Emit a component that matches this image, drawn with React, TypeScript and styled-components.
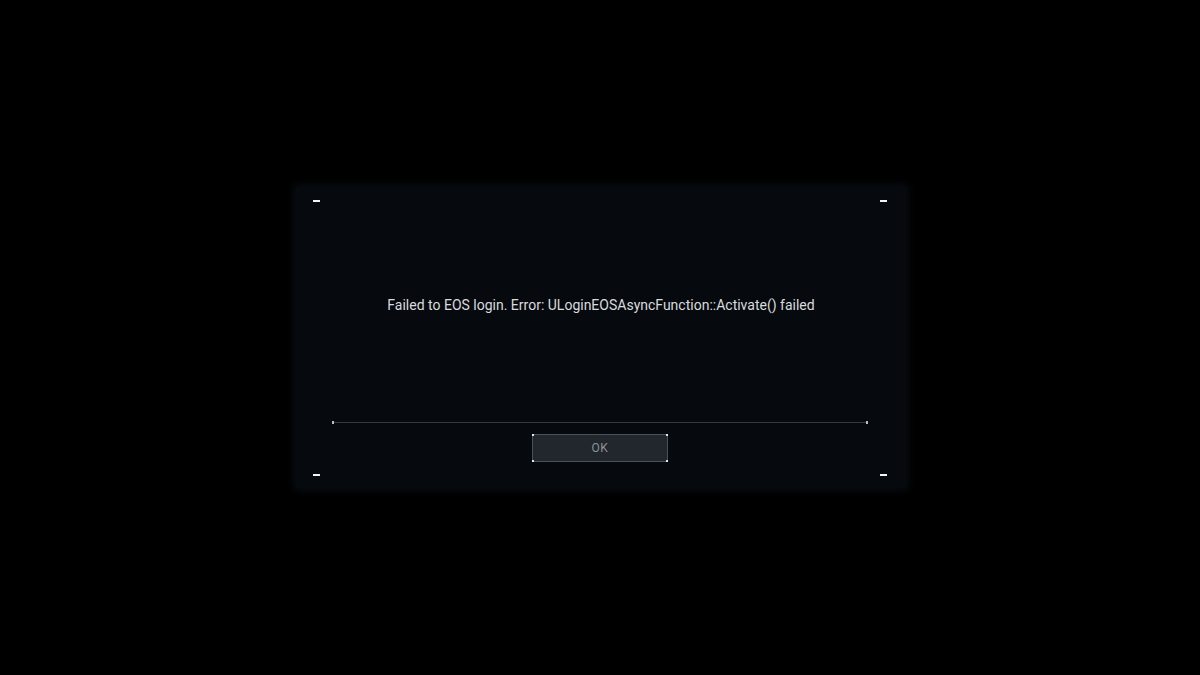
import React from 'react';
import styled, { createGlobalStyle } from 'styled-components';

const GlobalStyle = createGlobalStyle`
  html, body {
    margin: 0;
    padding: 0;
    background: #000;
  }
  #root {
    height: 675px;
  }
`;

const Screen = styled.div`
  width: 1200px;
  height: 675px;
  background: #000;
  display: flex;
  align-items: center;
  justify-content: center;
  font-family: Roboto, "Noto Sans", sans-serif;
`;

const Panel = styled.div`
  position: relative;
  width: 610px;
  height: 301px;
  margin-left: 2px;
  background: #060a0e;
  box-shadow: 0 0 8px 2px rgba(10, 16, 22, 0.85);
  display: flex;
  flex-direction: column;
  align-items: center;
  box-sizing: border-box;
  padding: 107px 36px 0;
`;

const Corner = styled.span<{ $top?: boolean; $left?: boolean }>`
  position: absolute;
  width: 7px;
  height: 2px;
  background: #f2f4f6;
  ${(p) => (p.$top ? 'top: 13px;' : 'bottom: 12px;')}
  ${(p) => (p.$left ? 'left: 17px;' : 'right: 19px;')}
`;

const Message = styled.p`
  margin: 0;
  height: 22px;
  color: #d9dbde;
  font-size: 14px;
  line-height: 22px;
  white-space: nowrap;
`;

const Divider = styled.div`
  position: relative;
  width: 536px;
  height: 1px;
  margin-top: 106px;
  margin-left: -2px;
  background: #343a41;

  &::before,
  &::after {
    content: '';
    position: absolute;
    top: -1px;
    width: 2px;
    height: 3px;
    background: #b9bec4;
  }
  &::before { left: 0; }
  &::after { right: 0; }
`;

const Button = styled.button`
  position: relative;
  margin-top: 11px;
  margin-left: -2px;
  width: 136px;
  height: 28px;
  background: #22262d;
  border: 1px solid #4b5058;
  color: #8d9298;
  font-family: Roboto, "Noto Sans", sans-serif;
  font-size: 12px;
  letter-spacing: 0.5px;
  padding: 0;
  cursor: pointer;
`;

const Dot = styled.span<{ $top?: boolean; $left?: boolean }>`
  position: absolute;
  width: 2px;
  height: 2px;
  background: #e4e7ea;
  ${(p) => (p.$top ? 'top: -1px;' : 'bottom: -1px;')}
  ${(p) => (p.$left ? 'left: -1px;' : 'right: -1px;')}
`;

export default function App() {
  return (
    <>
      <GlobalStyle />
      <Screen>
        <Panel>
          <Corner $top $left />
          <Corner $top />
          <Corner $left />
          <Corner />
          <Message>Failed to EOS login. Error: ULoginEOSAsyncFunction::Activate() failed</Message>
          <Divider />
          <Button>
            <Dot $top $left />
            <Dot $top />
            <Dot $left />
            <Dot />
            OK
          </Button>
        </Panel>
      </Screen>
    </>
  );
}
